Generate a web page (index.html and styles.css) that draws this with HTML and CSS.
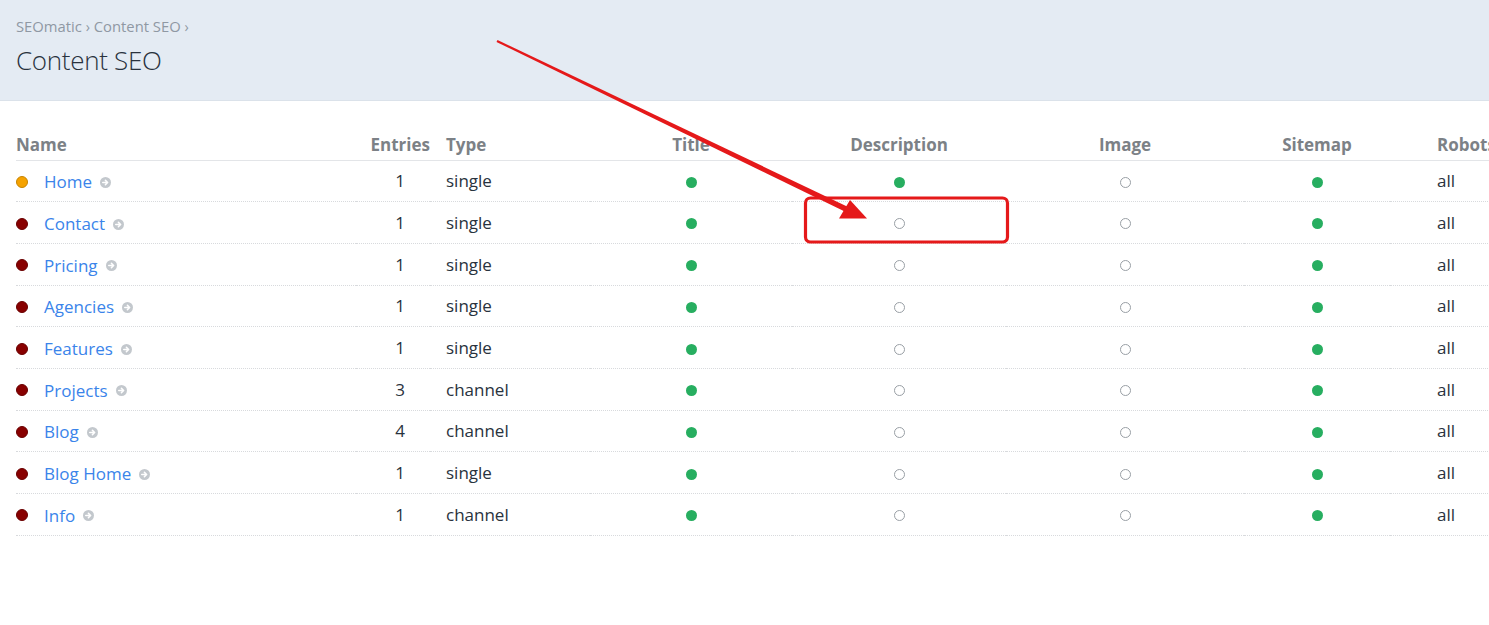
FILE: index.html
```html
<!DOCTYPE html>
<html lang="en">
<head>
<meta charset="utf-8">
<title>Content SEO</title>
<link rel="stylesheet" href="styles.css">
</head>
<body>
<header class="page-header">
  <nav class="crumbs"><a href="#">SEOmatic</a> <span class="sep">›</span> <a href="#">Content SEO</a> <span class="sep">›</span></nav>
  <h1 class="title">Content SEO</h1>
</header>
<main class="content">
  <table class="data">
    <colgroup>
      <col class="c-name"><col class="c-entries"><col class="c-type"><col class="c-title"><col class="c-desc"><col class="c-image"><col class="c-sitemap"><col class="c-robots">
    </colgroup>
    <thead>
      <tr>
        <th class="left">Name</th>
        <th class="right">Entries</th>
        <th class="left pad-type">Type</th>
        <th class="center">Title</th>
        <th class="center">Description</th>
        <th class="center">Image</th>
        <th class="center">Sitemap</th>
        <th class="left pad-robots">Robots</th>
      </tr>
    </thead>
    <tbody id="rows"></tbody>
  </table>
</main>
<svg class="annotation" width="1489" height="625" viewBox="0 0 1489 625" xmlns="http://www.w3.org/2000/svg">
  <polygon points="497.5,40 496.5,42 846.8,212.6 849.2,207.4" fill="#e5191a"/>
  <polygon points="850,200 867,218.5 839,218.5" fill="#e5191a"/>
  <rect x="805.5" y="198" width="202" height="44" rx="5" ry="5" fill="none" stroke="#e5191a" stroke-width="3.2"/>
</svg>
<script>
  var data = [
    ["Home", "live", 1, "single", 1, 1, 0, 1],
    ["Contact", "off", 1, "single", 1, 0, 0, 1],
    ["Pricing", "off", 1, "single", 1, 0, 0, 1],
    ["Agencies", "off", 1, "single", 1, 0, 0, 1],
    ["Features", "off", 1, "single", 1, 0, 0, 1],
    ["Projects", "off", 3, "channel", 1, 0, 0, 1],
    ["Blog", "off", 4, "channel", 1, 0, 0, 1],
    ["Blog Home", "off", 1, "single", 1, 0, 0, 1],
    ["Info", "off", 1, "channel", 1, 0, 0, 1]
  ];
  var go = '<svg class="go" width="11" height="11" viewBox="0 0 11 11"><circle cx="5.5" cy="5.5" r="5.5" fill="#c3c8cd"/><path d="M2.8 5.5H7.4M5.4 3.3L7.6 5.5L5.4 7.7" fill="none" stroke="#fff" stroke-width="1.6" stroke-linecap="round" stroke-linejoin="round"/></svg>';
  function dot(on) { return '<span class="mark ' + (on ? 'on' : 'off') + '"></span>'; }
  var html = '';
  data.forEach(function (r) {
    html += '<tr>' +
      '<td class="left"><span class="status ' + r[1] + '"></span><a class="name" href="#">' + r[0] + '</a>' + go + '</td>' +
      '<td class="right num">' + r[2] + '</td>' +
      '<td class="left pad-type">' + r[3] + '</td>' +
      '<td class="center">' + dot(r[4]) + '</td>' +
      '<td class="center">' + dot(r[5]) + '</td>' +
      '<td class="center">' + dot(r[6]) + '</td>' +
      '<td class="center">' + dot(r[7]) + '</td>' +
      '<td class="left pad-robots">all</td>' +
      '</tr>';
  });
  document.getElementById('rows').innerHTML = html;
</script>
</body>
</html>
```

FILE: styles.css
```css
html, body {
  margin: 0;
  padding: 0;
  overflow: hidden;
  background: #ffffff;
}
body {
  font-family: "Open Sans", "Noto Sans", "Liberation Sans", sans-serif;
  color: #29323d;
  width: 1489px;
  height: 625px;
}
a { text-decoration: none; }

.page-header {
  background: #e4ebf3;
  height: 101px;
  border-bottom: 1px solid #dbe2ea;
  box-sizing: border-box;
  padding: 15px 16px 0;
}
.crumbs {
  font-size: 14.8px;
  line-height: 22px;
  color: #8f98a3;
}
.crumbs a { color: #8f98a3; }
.crumbs .sep { font-size: 14px; }
.title {
  margin: 3px 0 0;
  font-size: 26px;
  font-weight: 300;
  line-height: 38px;
  color: #29323d;
  letter-spacing: -0.3px;
}

.content {
  padding: 29px 0 0 16px;
}
.data {
  border-collapse: collapse;
  table-layout: fixed;
  width: 1520px;
}
.c-name { width: 340px; }
.c-entries { width: 74px; }
.c-type { width: 160px; }
.c-title { width: 202px; }
.c-desc { width: 214px; }
.c-image { width: 238px; }
.c-sitemap { width: 146px; }
.c-robots { width: 146px; }

.data th {
  font-size: 17px;
  font-weight: 700;
  color: #7c8186;
  height: 30px;
  padding: 0;
  border-bottom: 1px solid #e3e5e8;
  box-sizing: border-box;
  white-space: nowrap;
  overflow: hidden;
}
.data td {
  font-size: 17px;
  height: 41.7px;
  padding: 0;
  box-sizing: border-box;
  border-bottom: 1px dotted #d8dadd;
  white-space: nowrap;
  color: #29323d;
  vertical-align: middle;
}
.left { text-align: left; }
.right { text-align: right; }
.center { text-align: center; }
.data td.num { padding-right: 25px; }
.data .pad-type { padding-left: 16px; }
.data .pad-robots { padding-left: 47px; }

.status {
  display: inline-block;
  width: 12px;
  height: 12px;
  border-radius: 50%;
  vertical-align: middle;
  margin: 0 16px 0 0;
  box-sizing: border-box;
}
.status.live { background: #f5a200; border: 1px solid #c78400; }
.status.off { background: #880000; border: 1px solid #6a0000; }
.name {
  color: #3a84ea;
  vertical-align: middle;
}
.go {
  display: inline-block;
  vertical-align: middle;
  margin: 1px 0 0 8px;
}

.mark {
  display: inline-block;
  width: 11px;
  height: 11px;
  border-radius: 50%;
  box-sizing: border-box;
  vertical-align: middle;
  margin-top: -1px;
}
.mark.on { background: #27ae60; }
.mark.off { border: 1px solid #999fa5; background: #fff; }

.annotation {
  position: absolute;
  left: 0;
  top: 0;
  pointer-events: none;
}
```
